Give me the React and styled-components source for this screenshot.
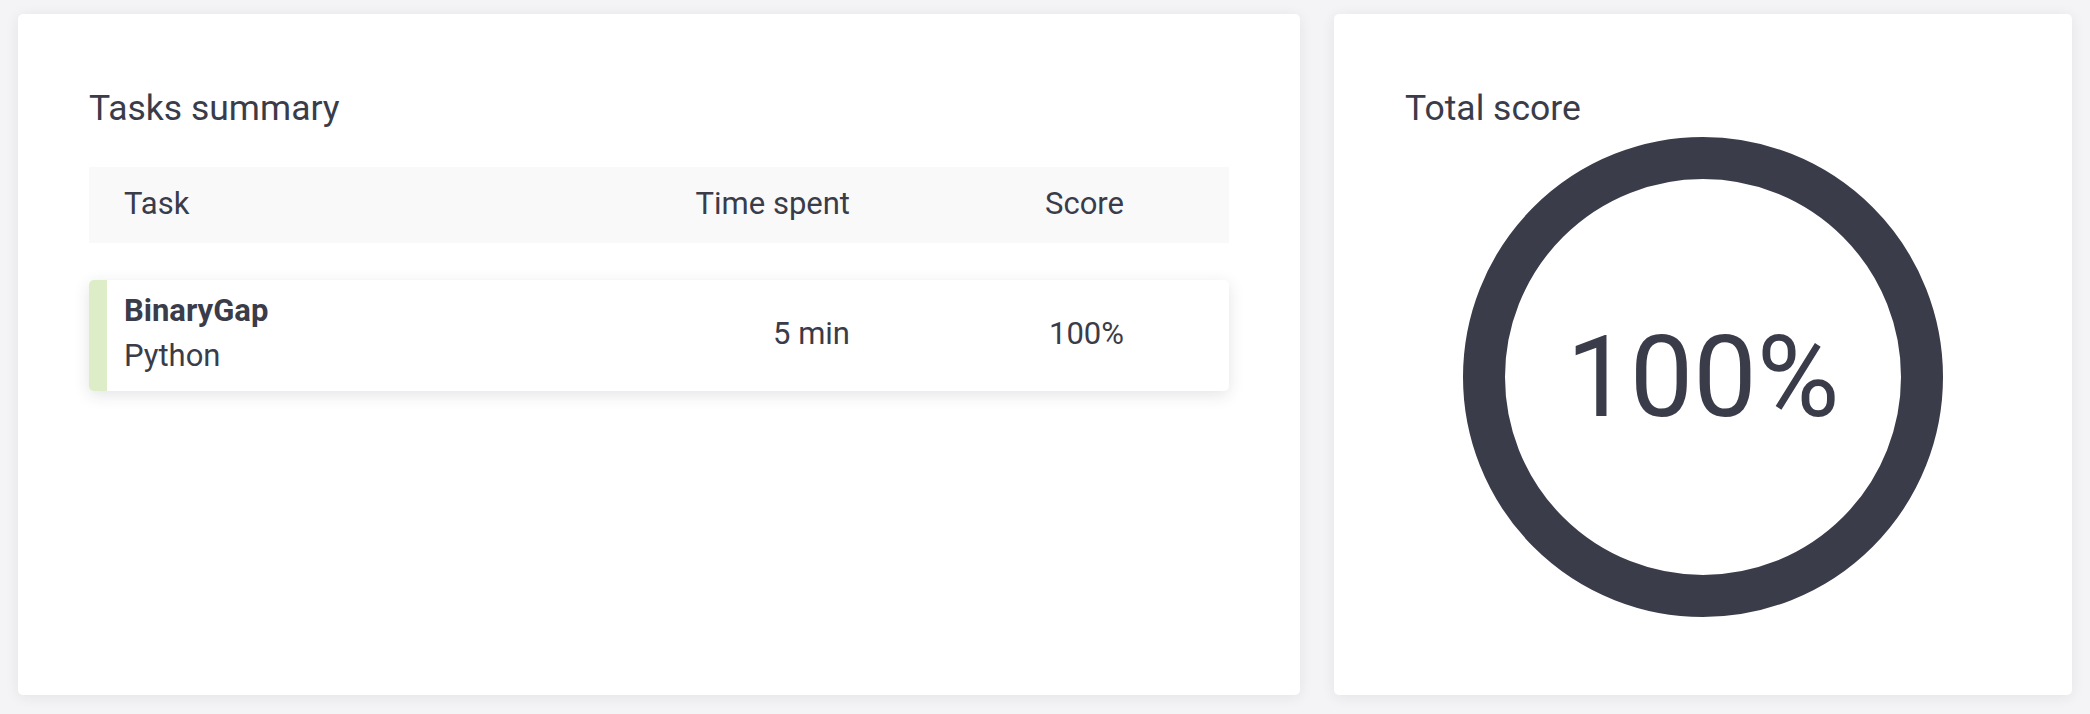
import React from "react";
import styled, { createGlobalStyle } from "styled-components";

const Global = createGlobalStyle`
  html, body { margin: 0; padding: 0; background: #f4f4f6; }
  body { font-family: Roboto, "Noto Sans", "Liberation Sans", sans-serif; color: #3a3c4a; }
  * { box-sizing: border-box; }
`;

const Page = styled.div`
  display: grid;
  grid-template-columns: 1282px 738px;
  column-gap: 34px;
  padding: 14px 18px 18px 18px;
  align-items: stretch;
`;

const Card = styled.section`
  background: #ffffff;
  border-radius: 5px;
  box-shadow: 0 2px 14px rgba(40, 44, 60, 0.08);
  padding: 74px 71px ${(p) => (p.$bottom ? p.$bottom : 72)}px 71px;
  display: flex;
  flex-direction: column;
`;

const Title = styled.h2`
  margin: 0;
  font-size: 35.5px;
  font-weight: 400;
  line-height: 40px;
  color: #3a3c4a;
`;

const Table = styled.div`
  margin-top: 39px;
  display: flex;
  flex-direction: column;
  gap: 37px;
`;

const Cols = styled.div`
  display: grid;
  grid-template-columns: 1fr 300px 274px;
  padding-right: 105px;
  align-items: center;
`;

const HeaderRow = styled(Cols)`
  height: 76px;
  background: #f9f9fa;
  padding-left: 35px;
  padding-bottom: 3px;
  font-size: 31px;
  color: #3a3c4a;
`;

const TaskRow = styled(Cols)`
  height: 111px;
  background: #ffffff;
  border-radius: 5px;
  border-left: 18px solid #dcedc8;
  padding-left: 17px;
  padding-bottom: 5px;
  box-shadow: 0 4px 16px rgba(40, 44, 60, 0.13);
  font-size: 31px;
`;

const Cell = styled.div`
  text-align: ${(p) => (p.$right ? "right" : "left")};
  line-height: 45px;
`;

const TaskName = styled.div`
  font-weight: 700;
  line-height: 45px;
`;

const ScoreWrap = styled.div`
  margin-top: 9px;
  display: flex;
  justify-content: center;
  position: relative;
`;

const ScoreText = styled.div`
  position: absolute;
  inset: 0;
  display: flex;
  align-items: center;
  justify-content: center;
  font-size: 113px;
  font-weight: 400;
  color: #3a3c4a;
`;

export default function App() {
  return (
    <>
      <Global />
      <Page>
        <Card>
          <Title>Tasks summary</Title>
          <Table>
            <HeaderRow>
              <Cell>Task</Cell>
              <Cell $right>Time spent</Cell>
              <Cell $right>Score</Cell>
            </HeaderRow>
            <TaskRow>
              <Cell>
                <TaskName>BinaryGap</TaskName>
                <div>Python</div>
              </Cell>
              <Cell $right>5 min</Cell>
              <Cell $right>100%</Cell>
            </TaskRow>
          </Table>
        </Card>
        <Card $bottom={78}>
          <Title>Total score</Title>
          <ScoreWrap>
            <svg width="480" height="480" viewBox="0 0 480 480">
              <circle cx="240" cy="240" r="219" fill="none" stroke="#3a3c4a" strokeWidth="42" />
            </svg>
            <ScoreText>100%</ScoreText>
          </ScoreWrap>
        </Card>
      </Page>
    </>
  );
}
